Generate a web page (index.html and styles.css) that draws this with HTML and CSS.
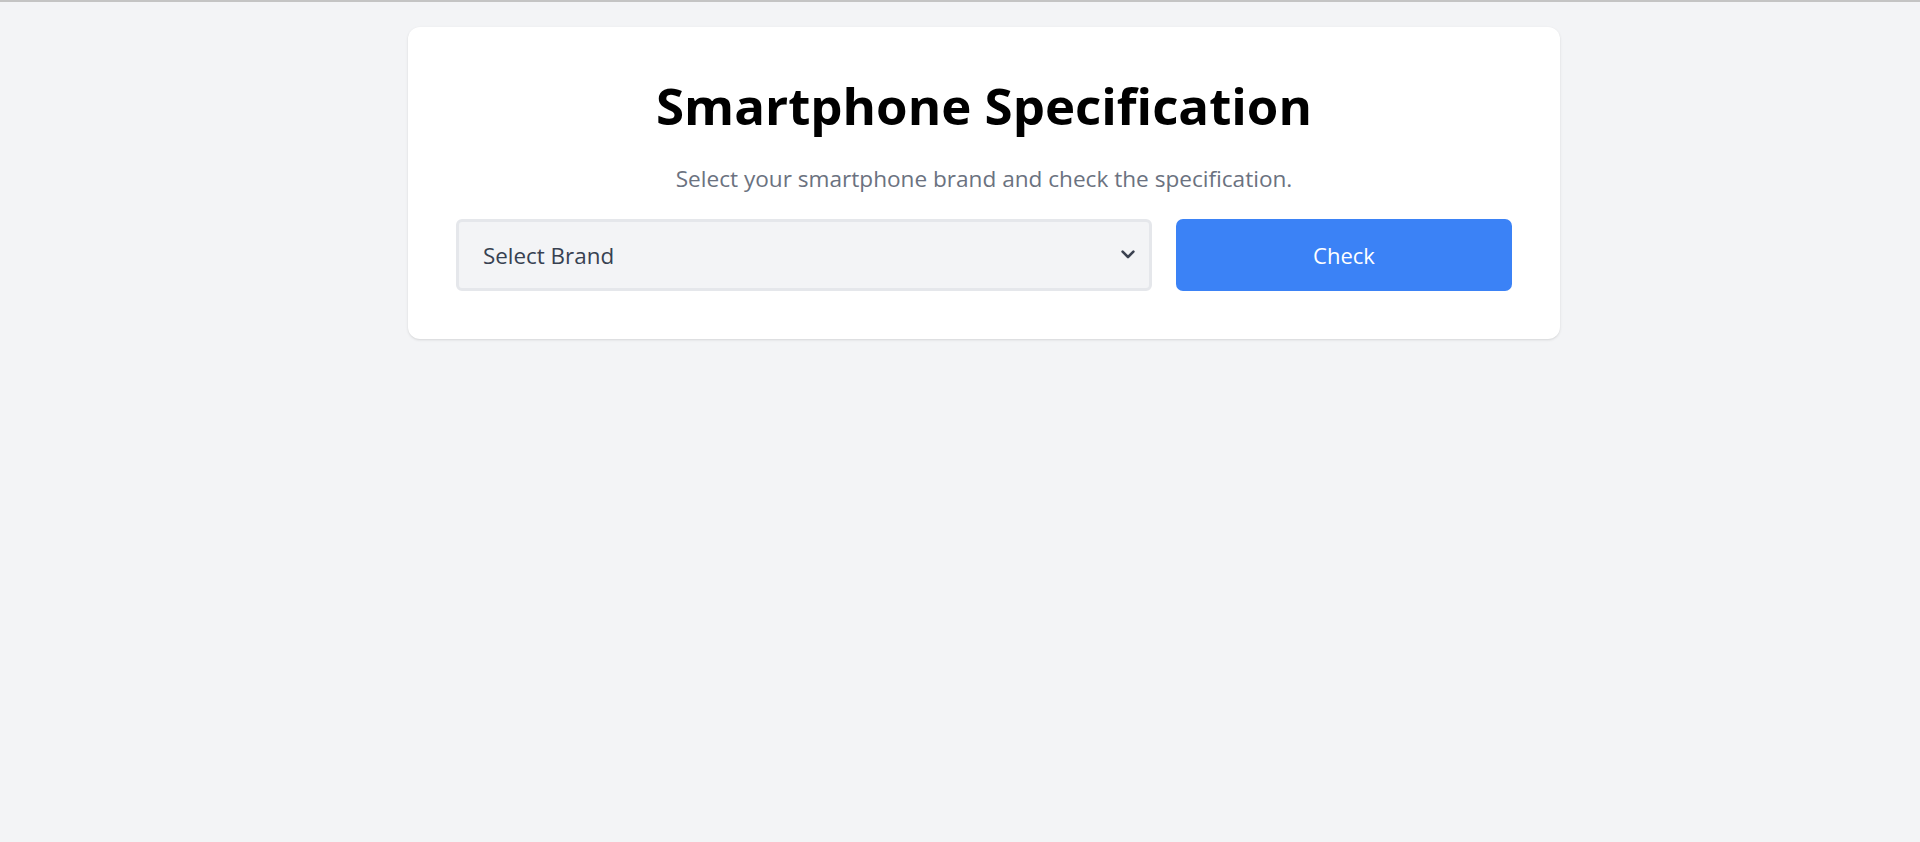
FILE: index.html
```html
<!DOCTYPE html>
<html lang="en">
<head>
<meta charset="utf-8">
<title>Smartphone Specification</title>
<link rel="stylesheet" href="styles.css">
</head>
<body>
<div class="topline"></div>
<main class="page">
  <section class="card">
    <h1 class="title">Smartphone Specification</h1>
    <p class="subtitle">Select your smartphone brand and check the specification.</p>
    <div class="controls">
      <div class="select-wrap">
        <select class="brand-select">
          <option>Select Brand</option>
          <option>Apple</option>
          <option>Samsung</option>
          <option>Xiaomi</option>
        </select>
        <svg class="chevron" width="14" height="9" viewBox="0 0 14 9" aria-hidden="true">
          <polyline points="1.6,1.6 7,7 12.4,1.6" fill="none" stroke="#3b4250" stroke-width="2.6" stroke-linecap="round" stroke-linejoin="round"/>
        </svg>
      </div>
      <button class="check-btn" type="button">Check</button>
    </div>
  </section>
</main>
</body>
</html>
```

FILE: styles.css
```css
* {
  box-sizing: border-box;
}

html, body {
  margin: 0;
  padding: 0;
}

body {
  background: #f3f4f6;
  font-family: "Open Sans", "Noto Sans", "Liberation Sans", sans-serif;
  min-height: 842px;
}

.topline {
  height: 2px;
  background: #c4c4c4;
}

.page {
  display: flex;
  justify-content: center;
  padding: 25px 0 0 48px;
}

.card {
  width: 1152px;
  background: #ffffff;
  border-radius: 12px;
  box-shadow: 0 1px 3px 0 rgba(0, 0, 0, 0.1), 0 1px 2px -1px rgba(0, 0, 0, 0.1);
  padding: 48px;
  text-align: center;
}

.title {
  margin: 2px 0 0;
  font-size: 51px;
  line-height: 57px;
  font-weight: 700;
  color: #000000;
}

.subtitle {
  margin: 31px 0 0;
  font-size: 22.6px;
  line-height: 28px;
  color: #6b7280;
}

.controls {
  margin-top: 26px;
  display: grid;
  grid-template-columns: repeat(3, 1fr);
  gap: 24px;
}

.select-wrap {
  position: relative;
  grid-column: span 2;
}

.brand-select {
  display: block;
  width: 100%;
  height: 72px;
  appearance: none;
  -webkit-appearance: none;
  background: #f3f4f6;
  border: 3px solid #e5e7eb;
  border-radius: 6px;
  padding: 0 48px 0 24px;
  font-family: inherit;
  font-size: 22.4px;
  color: #374151;
  outline: none;
}

.chevron {
  position: absolute;
  right: 17px;
  top: 31px;
  pointer-events: none;
}

.check-btn {
  height: 72px;
  background: #3b82f6;
  color: #ffffff;
  border: none;
  border-radius: 7px;
  font-family: inherit;
  font-size: 22px;
  cursor: pointer;
}
```
